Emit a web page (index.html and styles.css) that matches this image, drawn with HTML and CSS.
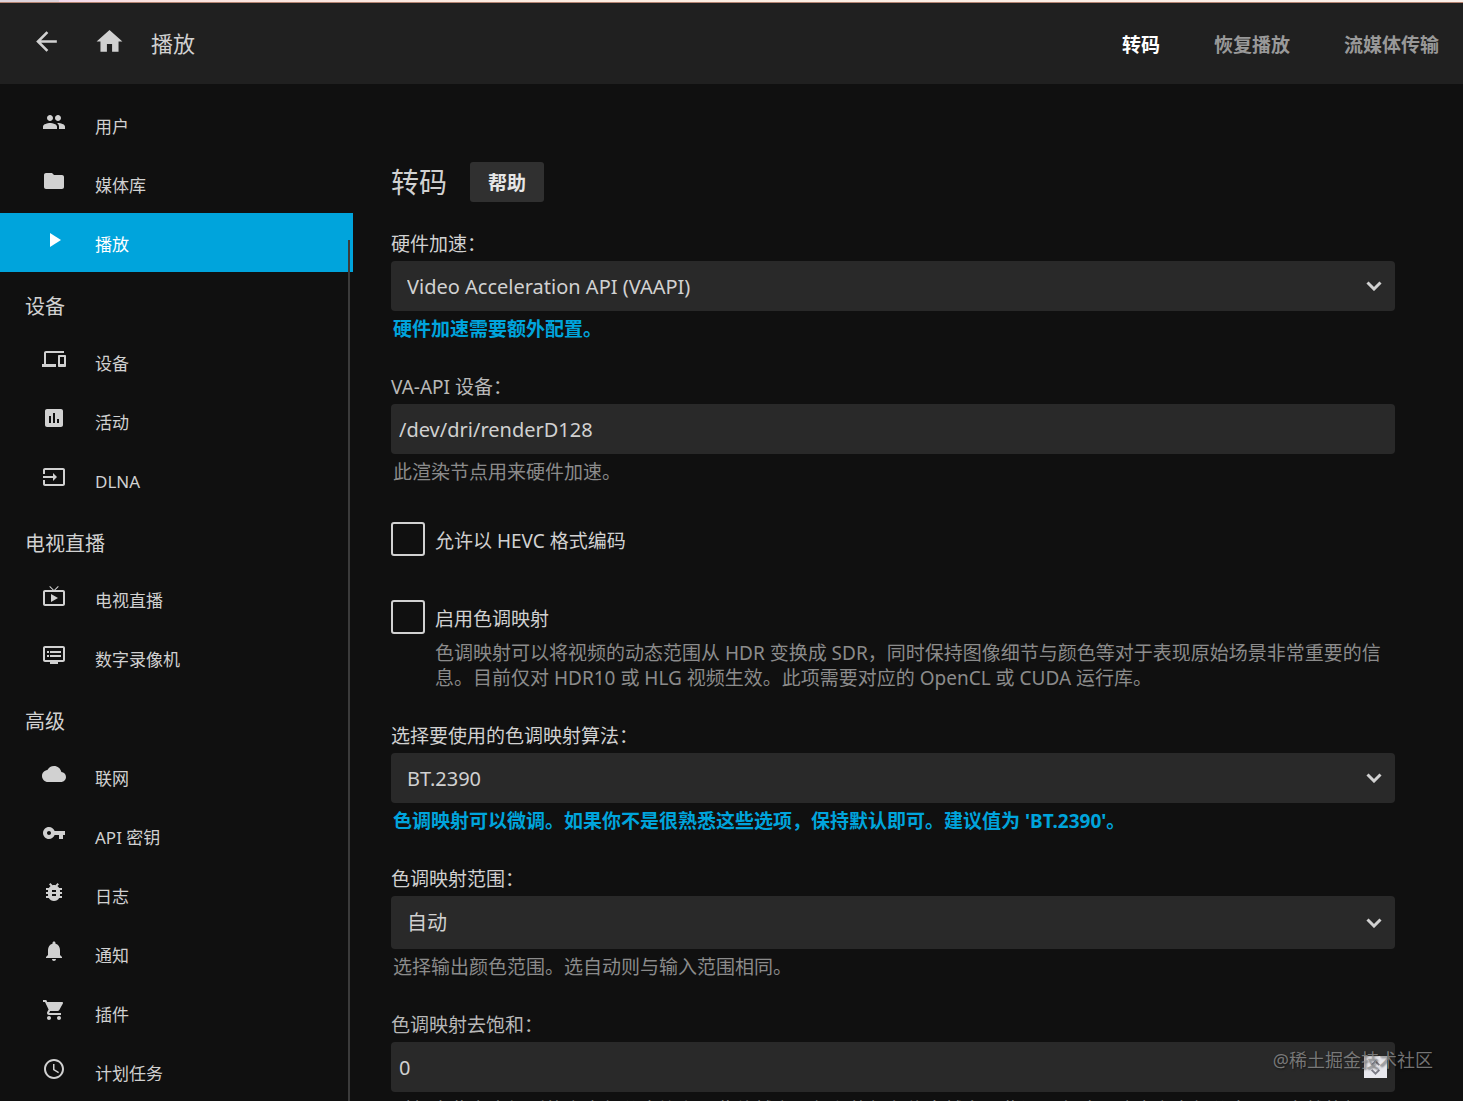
FILE: index.html
```html
<!DOCTYPE html>
<html lang="zh-CN">
<head>
  <meta charset="UTF-8" />
  <meta name="viewport" content="width=device-width, initial-scale=1" />
  <title>播放</title>
  <link rel="stylesheet" href="styles.css">
</head>
<body>
  <div class="top-strip"></div>

  <header class="header">
    <button class="icon-btn" aria-label="返回">
      <svg class="icon-lg" viewBox="0 0 24 24"><path d="M20 11H7.83l5.59-5.59L12 4l-8 8 8 8 1.41-1.41L7.83 13H20v-2z"/></svg>
    </button>
    <button class="icon-btn" aria-label="主页">
      <svg class="icon-lg" viewBox="0 0 24 24"><path d="M10 20v-6h4v6h5v-8h3L12 3 2 12h3v8z"/></svg>
    </button>
    <h1 class="header-title">播放</h1>
    <nav class="tabs">
      <a href="#transcoding" class="tab active">转码</a>
      <a href="#resume" class="tab">恢复播放</a>
      <a href="#streaming" class="tab">流媒体传输</a>
    </nav>
  </header>

  <div class="layout">
    <!-- Sidebar -->
    <nav class="sidebar">
      <a href="#users" class="nav-item">
        <svg class="icon" viewBox="0 0 24 24"><path d="M16 11c1.66 0 2.99-1.34 2.99-3S17.66 5 16 5c-1.66 0-3 1.34-3 3s1.34 3 3 3zm-8 0c1.66 0 2.99-1.34 2.99-3S9.66 5 8 5C6.34 5 5 6.34 5 8s1.34 3 3 3zm0 2c-2.33 0-7 1.17-7 3.5V19h14v-2.5c0-2.33-4.67-3.5-7-3.5zm8 0c-.29 0-.62.02-.97.05 1.16.84 1.97 1.97 1.97 3.45V19h6v-2.5c0-2.33-4.67-3.5-7-3.5z"/></svg>
        <span>用户</span>
      </a>
      <a href="#library" class="nav-item">
        <svg class="icon" viewBox="0 0 24 24"><path d="M10 4H4c-1.1 0-1.99.9-1.99 2L2 18c0 1.100.9 2 2 2h16c1.100 0 2-.9 2-2V8c0-1.100-.9-2-2-2h-8l-2-2z"/></svg>
        <span>媒体库</span>
      </a>
      <a href="#playback" class="nav-item active">
        <svg class="icon" viewBox="0 0 24 24"><path d="M8 5v14l11-7z"/></svg>
        <span>播放</span>
      </a>

      <h3 class="nav-header">设备</h3>
      <a href="#devices" class="nav-item">
        <svg class="icon" viewBox="0 0 24 24"><path d="M4 6h18V4H4c-1.100 0-2 .9-2 2v11H0v3h14v-3H4V6zm19 2h-6c-.55 0-1 .45-1 1v10c0 .55.45 1 1 1h6c.55 0 1-.45 1-1V9c0-.55-.45-1-1-1zm-1 9h-4v-7h4v7z"/></svg>
        <span>设备</span>
      </a>
      <a href="#activity" class="nav-item">
        <svg class="icon" viewBox="0 0 24 24"><path d="M19 3H5c-1.100 0-2 .9-2 2v14c0 1.100.9 2 2 2h14c1.100 0 2-.9 2-2V5c0-1.100-.9-2-2-2zM9 17H7v-7h2v7zm4 0h-2V7h2v10zm4 0h-2v-4h2v4z"/></svg>
        <span>活动</span>
      </a>
      <a href="#dlna" class="nav-item">
        <svg class="icon" viewBox="0 0 24 24"><path d="M21 3.010H3c-1.100 0-2 .9-2 2V9h2V4.990h18v14.030H3V15H1v4.010c0 1.100.9 1.980 2 1.980h18c1.100 0 2-.88 2-1.980v-14c0-1.110-.9-2-2-2zM11 16l4-4-4-4v3H1v2h10v3z"/></svg>
        <span>DLNA</span>
      </a>

      <h3 class="nav-header">电视直播</h3>
      <a href="#livetv" class="nav-item">
        <svg class="icon" viewBox="0 0 24 24"><path d="M21 6h-7.590l3.290-3.290L16 2l-4 4-4-4-.71.71L10.590 6H3c-1.100 0-2 .89-2 2v12c0 1.100.9 2 2 2h18c1.100 0 2-.9 2-2V8c0-1.110-.9-2-2-2zm0 14H3V8h18v12zM9 10v8l7-4z"/></svg>
        <span>电视直播</span>
      </a>
      <a href="#dvr" class="nav-item">
        <svg class="icon" viewBox="0 0 24 24"><path d="M21 3H3c-1.100 0-2 .9-2 2v12c0 1.100.9 2 2 2h5v2h8v-2h5c1.100 0 1.990-.9 1.990-2L23 5c0-1.100-.9-2-2-2zm0 14H3V5h18v12zm-2-9H8v2h11V8zm0 4H8v2h11v-2zM7 8H5v2h2V8zm0 4H5v2h2v-2z"/></svg>
        <span>数字录像机</span>
      </a>

      <h3 class="nav-header">高级</h3>
      <a href="#network" class="nav-item">
        <svg class="icon" viewBox="0 0 24 24"><path d="M19.350 10.040C18.670 6.590 15.640 4 12 4 9.110 4 6.600 5.640 5.350 8.040 2.340 8.360 0 10.910 0 14c0 3.310 2.690 6 6 6h13c2.760 0 5-2.240 5-5 0-2.640-2.050-4.780-4.650-4.960z"/></svg>
        <span>联网</span>
      </a>
      <a href="#keys" class="nav-item">
        <svg class="icon" viewBox="0 0 24 24"><path d="M12.650 10C11.830 7.670 9.610 6 7 6c-3.310 0-6 2.690-6 6s2.690 6 6 6c2.610 0 4.830-1.670 5.650-4H17v4h4v-4h2v-4H12.650zM7 14c-1.100 0-2-.9-2-2s.9-2 2-2 2 .9 2 2-.9 2-2 2z"/></svg>
        <span>API 密钥</span>
      </a>
      <a href="#logs" class="nav-item">
        <svg class="icon" viewBox="0 0 24 24"><path d="M20 8h-2.810c-.45-.78-1.070-1.450-1.820-1.960L17 4.410 15.590 3l-2.170 2.170C12.960 5.060 12.490 5 12 5c-.49 0-.96.06-1.410.17L8.410 3 7 4.410l1.620 1.630C7.880 6.550 7.260 7.220 6.810 8H4v2h2.090c-.05.33-.09.66-.09 1v1H4v2h2v1c0 .34.04.67.09 1H4v2h2.810c1.040 1.790 2.970 3 5.190 3s4.150-1.210 5.190-3H20v-2h-2.090c.05-.33.09-.66.09-1v-1h2v-2h-2v-1c0-.34-.04-.67-.09-1H20V8zm-6 8h-4v-2h4v2zm0-4h-4v-2h4v2z"/></svg>
        <span>日志</span>
      </a>
      <a href="#notifications" class="nav-item">
        <svg class="icon" viewBox="0 0 24 24"><path d="M12 22c1.100 0 2-.9 2-2h-4c0 1.100.89 2 2 2zm6-6v-5c0-3.070-1.640-5.640-4.500-6.320V4c0-.83-.67-1.500-1.500-1.500s-1.500.67-1.500 1.500v.68C7.630 5.360 6 7.920 6 11v5l-2 2v1h16v-1l-2-2z"/></svg>
        <span>通知</span>
      </a>
      <a href="#plugins" class="nav-item">
        <svg class="icon" viewBox="0 0 24 24"><path d="M7 18c-1.100 0-1.990.9-1.990 2S5.900 22 7 22s2-.9 2-2-.9-2-2-2zM1 2v2h2l3.600 7.590-1.350 2.450c-.16.28-.25.61-.25.96 0 1.100.9 2 2 2h12v-2H7.420c-.14 0-.25-.11-.25-.25l.03-.12.9-1.630h7.450c.75 0 1.410-.41 1.750-1.030l3.580-6.490c.08-.14.12-.31.12-.48 0-.55-.45-1-1-1H5.210l-.94-2H1zm16 16c-1.100 0-1.990.9-1.990 2s.89 2 1.990 2 2-.9 2-2-.9-2-2-2z"/></svg>
        <span>插件</span>
      </a>
      <a href="#tasks" class="nav-item">
        <svg class="icon" viewBox="0 0 24 24"><path d="M11.990 2C6.470 2 2 6.480 2 12s4.470 10 9.990 10C17.520 22 22 17.520 22 12S17.520 2 11.990 2zM12 20c-4.420 0-8-3.580-8-8s3.580-8 8-8 8 3.580 8 8-3.580 8-8 8zm.5-13H11v6l5.250 3.150.75-1.230-4.500-2.670z"/></svg>
        <span>计划任务</span>
      </a>
      <div class="scroll-thumb"></div>
    </nav>

    <!-- Transcoding settings -->
    <main class="content">
      <form>
        <div class="section-title">
          <h2>转码</h2>
          <button type="button" class="help-btn">帮助</button>
        </div>

        <div class="field">
          <label for="hwAccel">硬件加速：</label>
          <div class="select-wrap">
            <select id="hwAccel">
              <option>Video Acceleration API (VAAPI)</option>
            </select>
            <svg class="chevron" viewBox="0 0 16 10"><path d="M1.500 1.500L8 8l6.500-6.500"/></svg>
          </div>
          <a href="#hwhelp" class="hint link">硬件加速需要额外配置。</a>
        </div>

        <div class="field">
          <label for="vaapiDevice" class="dim">VA-API 设备：</label>
          <input type="text" id="vaapiDevice" value="/dev/dri/renderD128" />
          <div class="hint">此渲染节点用来硬件加速。</div>
        </div>

        <div class="field">
          <label class="check-row">
            <input type="checkbox" />
            <span>允许以 HEVC 格式编码</span>
          </label>
        </div>

        <div class="field">
          <label class="check-row">
            <input type="checkbox" />
            <span>启用色调映射</span>
          </label>
          <div class="check-desc">色调映射可以将视频的动态范围从 HDR 变换成 SDR，同时保持图像细节与颜色等对于表现原始场景非常重要的信息。目前仅对 HDR10 或 HLG 视频生效。此项需要对应的 OpenCL 或 CUDA 运行库。</div>
        </div>

        <div class="field">
          <label for="algorithm">选择要使用的色调映射算法：</label>
          <div class="select-wrap">
            <select id="algorithm">
              <option>BT.2390</option>
            </select>
            <svg class="chevron" viewBox="0 0 16 10"><path d="M1.500 1.500L8 8l6.500-6.500"/></svg>
          </div>
          <a href="#tonemap" class="hint link">色调映射可以微调。如果你不是很熟悉这些选项，保持默认即可。建议值为 'BT.2390'。</a>
        </div>

        <div class="field">
          <label for="range">色调映射范围：</label>
          <div class="select-wrap">
            <select id="range" class="tall">
              <option>自动</option>
            </select>
            <svg class="chevron" viewBox="0 0 16 10"><path d="M1.500 1.500L8 8l6.500-6.500"/></svg>
          </div>
          <div class="hint">选择输出颜色范围。选自动则与输入范围相同。</div>
        </div>

        <div class="field">
          <label for="desat" class="dim">色调映射去饱和：</label>
          <div class="number-wrap">
            <input type="number" id="desat" value="0" />
            <svg class="spinner" viewBox="0 0 24 22"><path d="M8 9l4-4 4 4M8 14l4 4 4-4"/></svg>
          </div>
          <div class="hint">对超出此亮度级别的高光部分去饱和，此值越高，保留的颜色信息越多。此设置有助于防止高光部分出现不自然的颜色。</div>
        </div>
      </form>
    </main>
  </div>

  <div class="watermark">@稀土掘金技术社区</div>
</body>
</html>
```
FILE: styles.css
```css
* {
  box-sizing: border-box;
}
body {
  margin: 0;
  height: 100vh;
  overflow: hidden;
  display: flex;
  flex-direction: column;
  background: #101010;
  color: #d1d1d1;
  font-family: "Noto Sans", "Noto Sans CJK SC", sans-serif;
  font-size: 19px;
  line-height: 25px;
}
h1, h2, h3 {
  margin: 0;
  font-weight: 400;
}
a {
  color: inherit;
  text-decoration: none;
}
button, input, select {
  font-family: inherit;
  color: inherit;
}
svg {
  fill: currentColor;
  flex: none;
}
.top-strip {
  flex: none;
  height: 3px;
  border-bottom: 1px solid #b58472;
  background: linear-gradient(90deg, #ddd4dc 0, #ddd4dc 4%, #f3d9ee 4%, #fbe3e0 10%, #fdeee2 40%, #fbf0ea 100%);
}

/* Header */
.header {
  flex: none;
  display: flex;
  align-items: center;
  height: 81px;
  padding: 0 24px 0 18px;
  background: #202020;
}
.icon-btn {
  display: flex;
  justify-content: center;
  width: 56px;
  margin-right: 7px;
  padding: 0 0 4px;
  border: none;
  background: none;
  cursor: pointer;
}
.icon-lg {
  width: 31px;
  height: 31px;
}
.header-title {
  margin-left: 7px;
  font-size: 22px;
}
.tabs {
  display: flex;
  gap: 54px;
  margin-left: auto;
  padding-top: 4px;
  font-weight: 700;
}
.tab {
  color: #999;
}
.tab.active {
  color: #fff;
}

/* Sidebar */
.layout {
  flex: 1;
  min-height: 0;
  display: flex;
}
.sidebar {
  position: relative;
  flex: none;
  width: 353px;
  padding-top: 11px;
  overflow: hidden;
}
.nav-item {
  display: flex;
  align-items: center;
  gap: 29px;
  height: 59px;
  padding: 4px 42px 0;
  font-size: 17px;
}
.nav-item.active {
  background: #00a4dc;
  color: #fff;
}
.icon {
  width: 24px;
  height: 24px;
  margin-bottom: 10px;
}
.nav-header {
  display: flex;
  align-items: center;
  height: 60px;
  padding: 9px 25px 0;
  font-size: 20px;
}
.scroll-thumb {
  position: absolute;
  top: 156px;
  bottom: 0;
  right: 3px;
  width: 2px;
  background: #3b3b3b;
}

/* Content */
.content {
  flex: 1;
  min-width: 0;
  padding: 78px 68px 0 38px;
  overflow: hidden;
}
.section-title {
  display: flex;
  align-items: center;
  gap: 23px;
  margin-bottom: 30px;
}
.section-title h2 {
  font-size: 28px;
  line-height: 40px;
}
.help-btn {
  height: 40px;
  padding: 0 18px;
  border: none;
  border-radius: 3px;
  background: #303030;
  color: #e6e6e6;
  font-size: 19px;
  font-weight: 700;
  cursor: pointer;
}
.field {
  margin-bottom: 33px;
}
.field label {
  display: block;
  margin-bottom: 4px;
}
.field label.dim {
  color: #b8b8b8;
}
input[type="text"], input[type="number"], select {
  display: block;
  width: 100%;
  height: 50px;
  padding: 0 8px;
  border: none;
  border-radius: 4px;
  background: #292929;
  font-size: 20px;
  appearance: none;
}
select {
  padding: 0 16px;
}
select.tall {
  height: 53px;
}
input[type="number"] {
  appearance: textfield;
}
input[type="number"]::-webkit-inner-spin-button {
  display: none;
}
.select-wrap, .number-wrap {
  position: relative;
}
.chevron {
  position: absolute;
  right: 13px;
  top: 50%;
  width: 16px;
  height: 10px;
  margin-top: -5px;
  fill: none;
  stroke: #d1d1d1;
  stroke-width: 3;
}
.spinner {
  position: absolute;
  right: 8px;
  top: 14px;
  width: 23px;
  height: 22px;
  background: #e8e8ee;
  fill: none;
  stroke: #7c7c86;
  stroke-width: 2;
}
.hint {
  display: block;
  padding: 6px 2px 0;
  color: #8b8b8b;
}
.hint.link {
  color: #00a4dc;
  font-weight: 700;
}
.field .check-row {
  display: flex;
  align-items: center;
  gap: 10px;
  margin: 0;
  padding: 4px 0 7px;
}
.check-row span {
  padding-top: 4px;
}
input[type="checkbox"] {
  appearance: none;
  flex: none;
  width: 34px;
  height: 34px;
  margin: 0;
  border: 2px solid #d1d1d1;
  border-radius: 3px;
}
.check-desc {
  padding-left: 44px;
  color: #8b8b8b;
}
.watermark {
  position: absolute;
  right: 30px;
  bottom: 28px;
  color: rgba(150, 150, 150, 0.75);
  font-size: 18px;
  text-shadow: 1px 1px 2px rgba(0, 0, 0, 0.5);
}
```
